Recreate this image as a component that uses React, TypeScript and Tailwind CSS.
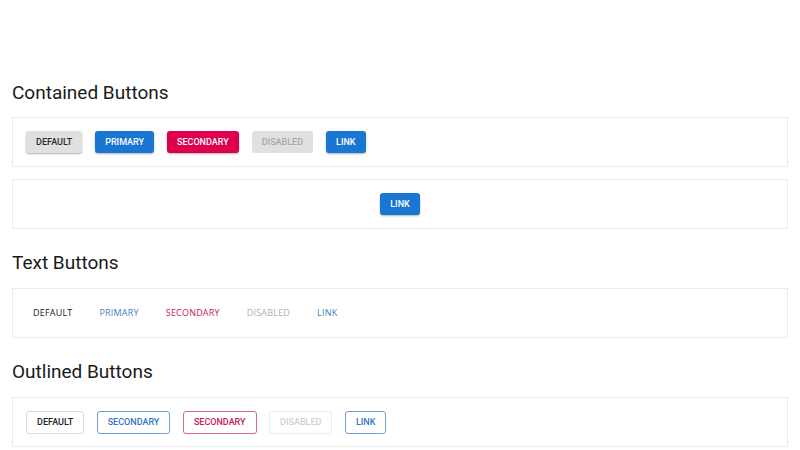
import React from "react";

const roboto = { fontFamily: "Roboto, 'Liberation Sans', sans-serif" };
const openSans = { fontFamily: "'Open Sans', 'Noto Sans', sans-serif" };

const Heading: React.FC<{ children: React.ReactNode; className?: string }> = ({ children, className }) => (
  <h2 className={`text-[19px] leading-[24px] text-[#1a1a1a] font-normal ${className ?? ""}`}>{children}</h2>
);

const Panel: React.FC<{ children: React.ReactNode; className?: string }> = ({ children, className }) => (
  <div className={`border border-[#ececec] h-[50px] flex items-center px-[13px] ${className ?? ""}`}>{children}</div>
);

const contained = "h-[22px] px-[10px] pt-px rounded-[3px] text-[9px] font-medium uppercase flex items-center";
const outlined = "h-[23px] px-[10px] pt-px rounded-[3px] text-[9px] font-medium uppercase flex items-center border bg-white";
const text = "px-[7px] text-[9px] tracking-[0.2px] uppercase";
const shadow = "shadow-[0_1px_2px_rgba(0,0,0,0.3)]";

export default function App() {
  return (
    <div className="bg-white w-[800px] h-[450px] overflow-hidden px-[12px] pt-[81px]" style={roboto}>
      <Heading>Contained Buttons</Heading>
      <Panel className="mt-[12px] gap-[13px]">
        <button className={`${contained} ${shadow} bg-[#e0e0e0] text-[#2a2a2a]`}>Default</button>
        <button className={`${contained} ${shadow} bg-[#1976d2] text-white`}>Primary</button>
        <button className={`${contained} ${shadow} bg-[#dc004e] text-white`}>Secondary</button>
        <button className={`${contained} bg-[#e0e0e0] text-[#a8a8a8]`}>Disabled</button>
        <button className={`${contained} ${shadow} bg-[#1976d2] text-white`}>Link</button>
      </Panel>
      <Panel className="mt-[12px] justify-center">
        <button className={`${contained} ${shadow} bg-[#1976d2] text-white`}>Link</button>
      </Panel>

      <Heading className="mt-[22px]">Text Buttons</Heading>
      <Panel className="mt-[13px] gap-[13px]">
        <span className={`${text} text-[#222]`} style={openSans}>Default</span>
        <span className={`${text} text-[#3f7fc2]`} style={openSans}>Primary</span>
        <span className={`${text} text-[#c2185b]`} style={openSans}>Secondary</span>
        <span className={`${text} text-[#b0b0b0]`} style={openSans}>Disabled</span>
        <span className={`${text} text-[#3f7fc2]`} style={openSans}>Link</span>
      </Panel>

      <Heading className="mt-[22px]">Outlined Buttons</Heading>
      <Panel className="mt-[13px] gap-[12.5px]">
        <button className={`${outlined} border-[#dadada] text-[#222]`}>Default</button>
        <button className={`${outlined} border-[#6f9fd3] text-[#2f76c4]`}>Secondary</button>
        <button className={`${outlined} border-[#d46a90] text-[#c8195a]`}>Secondary</button>
        <button className={`${outlined} border-[#ececec] text-[#d0d0d0]`}>Disabled</button>
        <button className={`${outlined} border-[#6f9fd3] text-[#2f76c4]`}>Link</button>
      </Panel>
    </div>
  );
}
